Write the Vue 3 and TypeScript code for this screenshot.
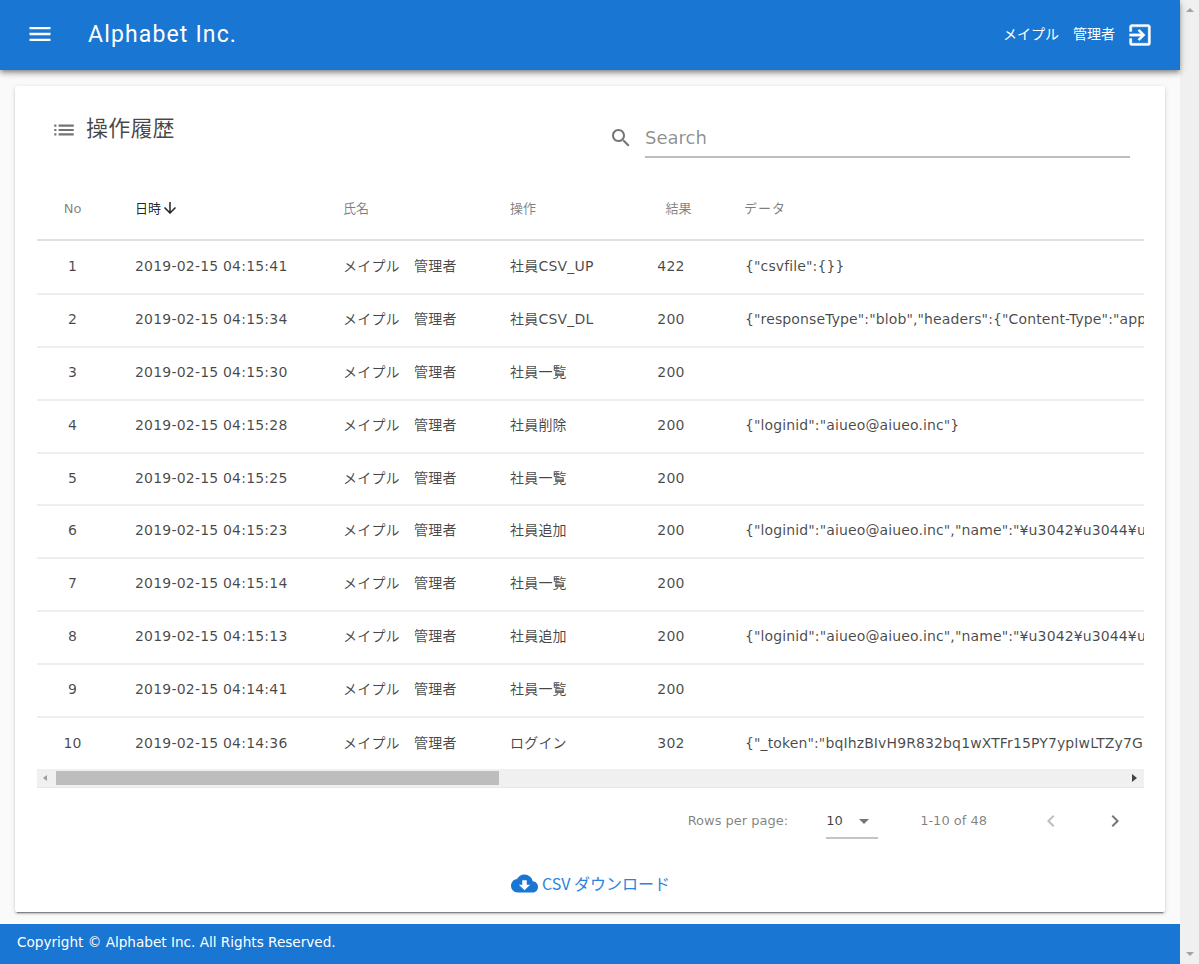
<script setup lang="ts">
interface LogRow {
  no: number
  at: string
  op: string
  code: number
  data: string
}

const name = 'メイプル　管理者'
const rows: LogRow[] = [
  { no: 1, at: '2019-02-15 04:15:41', op: '社員CSV_UP', code: 422, data: '{"csvfile":{}}' },
  { no: 2, at: '2019-02-15 04:15:34', op: '社員CSV_DL', code: 200, data: '{"responseType":"blob","headers":{"Content-Type":"application/json"}}' },
  { no: 3, at: '2019-02-15 04:15:30', op: '社員一覧', code: 200, data: '' },
  { no: 4, at: '2019-02-15 04:15:28', op: '社員削除', code: 200, data: '{"loginid":"aiueo@aiueo.inc"}' },
  { no: 5, at: '2019-02-15 04:15:25', op: '社員一覧', code: 200, data: '' },
  { no: 6, at: '2019-02-15 04:15:23', op: '社員追加', code: 200, data: '{"loginid":"aiueo@aiueo.inc","name":"¥u3042¥u3044¥u3046¥u3048¥u304a"}' },
  { no: 7, at: '2019-02-15 04:15:14', op: '社員一覧', code: 200, data: '' },
  { no: 8, at: '2019-02-15 04:15:13', op: '社員追加', code: 200, data: '{"loginid":"aiueo@aiueo.inc","name":"¥u3042¥u3044¥u3046¥u3048¥u304a"}' },
  { no: 9, at: '2019-02-15 04:14:41', op: '社員一覧', code: 200, data: '' },
  { no: 10, at: '2019-02-15 04:14:36', op: 'ログイン', code: 302, data: '{"_token":"bqIhzBIvH9R832bq1wXTFr15PY7ypIwLTZy7GkQmPd2x"}' },
]
</script>

<template>
  <div class="shell">
    <div class="page">
      <header class="appbar">
        <svg class="menu-icon" viewBox="0 0 24 24"><path d="M3 6h18v2H3V6m0 5h18v2H3v-2m0 5h18v2H3v-2z" /></svg>
        <span class="brand">Alphabet Inc.</span>
        <span class="user">{{ name }}</span>
        <svg class="exit-icon" viewBox="0 0 24 24"><path d="M10.09 15.59L11.5 17l5-5-5-5-1.41 1.41L12.67 11H3v2h9.67l-2.58 2.59zM19 3H5c-1.11 0-2 .9-2 2v4h2V5h14v14H5v-4H3v4c0 1.1.89 2 2 2h14c1.1 0 2-.9 2-2V5c0-1.1-.9-2-2-2z" /></svg>
      </header>

      <main class="content">
        <section class="card">
          <div class="card-title">
            <div class="heading">
              <svg class="list-icon" viewBox="0 0 24 24"><path d="M3 13h2v-2H3v2zm0 4h2v-2H3v2zm0-8h2V7H3v2zm4 4h14v-2H7v2zm0 4h14v-2H7v2zM7 7v2h14V7H7z" /></svg>
              <h1>操作履歴</h1>
            </div>
            <div class="search">
              <svg class="search-icon" viewBox="0 0 24 24"><path d="M15.5 14h-.79l-.28-.27C15.41 12.59 16 11.11 16 9.5 16 5.91 13.09 3 9.5 3S3 5.91 3 9.5 5.91 16 9.5 16c1.61 0 3.09-.59 4.23-1.57l.27.28v.79l5 4.99L20.49 19l-4.99-5zm-6 0C7.01 14 5 11.99 5 9.5S7.01 5 9.5 5 14 7.01 14 9.5 11.99 14 9.5 14z" /></svg>
              <div class="search-field">Search</div>
            </div>
          </div>

          <div class="table-wrap">
            <div class="table">
              <div class="row head">
                <div class="cell center first latin">No</div>
                <div class="cell active">日時<svg class="sort-icon" viewBox="0 0 24 24"><path d="M20 12l-1.41-1.41L13 16.17V4h-2v12.17l-5.58-5.59L4 12l8 8 8-8z" /></svg></div>
                <div class="cell">氏名</div>
                <div class="cell">操作</div>
                <div class="cell center shifted">結果</div>
                <div class="cell data-head">データ</div>
              </div>
              <div v-for="r in rows" :key="r.no" class="row body">
                <div class="cell center first">{{ r.no }}</div>
                <div class="cell">{{ r.at }}</div>
                <div class="cell cjk">{{ name }}</div>
                <div class="cell cjk">{{ r.op }}</div>
                <div class="cell center code">{{ r.code }}</div>
                <div class="cell data">{{ r.data }}</div>
              </div>
            </div>
          </div>

          <div class="hscroll">
            <span class="arrow-left"></span>
            <span class="thumb"></span>
            <span class="arrow-right"></span>
          </div>

          <div class="pagination">
            <span class="rows-label">Rows per page:</span>
            <div class="select">
              <span>10</span>
              <svg class="drop-icon" viewBox="0 0 24 24"><path d="M7 10l5 5 5-5z" /></svg>
            </div>
            <span class="range">1-10 of 48</span>
            <svg class="chev prev" viewBox="0 0 24 24"><path d="M15.41 7.41L14 6l-6 6 6 6 1.41-1.41L10.83 12z" /></svg>
            <svg class="chev next" viewBox="0 0 24 24"><path d="M10 6L8.59 7.41 13.17 12l-4.58 4.59L10 18l6-6z" /></svg>
          </div>

          <div class="download">
            <svg class="cloud-icon" viewBox="0 0 24 24"><path d="M19.35 10.04C18.67 6.59 15.64 4 12 4 9.11 4 6.6 5.64 5.35 8.04 2.34 8.36 0 10.91 0 14c0 3.31 2.69 6 6 6h13c2.76 0 5-2.24 5-5 0-2.64-2.05-4.78-4.65-4.96zM17 13l-5 5-5-5h3V9h4v4h3z" /></svg>
            <span>CSV ダウンロード</span>
          </div>
        </section>
      </main>

      <footer class="footer">Copyright © Alphabet Inc. All Rights Reserved.</footer>
    </div>

    <div class="vscroll">
      <span class="arrow-up"></span>
      <span class="arrow-down"></span>
    </div>
  </div>
</template>

<style scoped>
.shell {
  display: flex;
  height: 964px;
  width: 1199px;
  overflow: hidden;
  background: #fafafa;
  font-family: "DejaVu Sans", "Noto Sans CJK JP", sans-serif;
  color: rgba(0, 0, 0, 0.72);
}
.page {
  flex: 1;
  min-width: 0;
  display: flex;
  flex-direction: column;
}
.appbar {
  height: 70px;
  flex: none;
  display: flex;
  align-items: center;
  background: #1976d2;
  color: #fff;
  box-shadow: 0 2px 4px -1px rgba(0, 0, 0, 0.3), 0 4px 5px 0 rgba(0, 0, 0, 0.2), 0 1px 10px 0 rgba(0, 0, 0, 0.12);
  position: relative;
  padding: 0 26px 0 26px;
}
.menu-icon {
  width: 28px;
  height: 28px;
  fill: #fff;
  margin-top: -2px;
}
.brand {
  margin-left: 34px;
  margin-right: auto;
  font: 400 23px Roboto, sans-serif;
  letter-spacing: 1.15px;
  margin-top: -2px;
}
.user {
  font-size: 14px;
  font-family: "Noto Sans CJK JP", sans-serif;
  margin-top: -4px;
}
.exit-icon {
  width: 28px;
  height: 28px;
  margin-left: 11px;
  fill: #fff;
  stroke: #fff;
  stroke-width: 0.3px;
}
.content {
  flex: 1;
  padding: 16px 15px 12px;
  min-height: 0;
}
.card {
  height: 826px;
  background: #fff;
  border-radius: 2px;
  box-shadow: 0 3px 1px -2px rgba(0, 0, 0, 0.35), 0 2px 2px 0 rgba(0, 0, 0, 0.14), 0 1px 5px 0 rgba(0, 0, 0, 0.12);
  padding: 0 21px 0 22px;
  display: flex;
  flex-direction: column;
}
.card-title {
  height: 92px;
  flex: none;
  display: flex;
  justify-content: space-between;
  padding: 0 14px 0 14px;
}
.heading {
  display: flex;
  align-items: center;
  height: 88px;
}
.heading h1 {
  margin: 0 0 8px 9px;
  font: 400 22px "Noto Sans CJK JP", sans-serif;
  letter-spacing: 0.2px;
}
.list-icon {
  width: 26px;
  height: 26px;
  fill: rgba(0, 0, 0, 0.55);
}
.search {
  display: flex;
  align-items: flex-start;
  padding-top: 40px;
}
.search-icon {
  width: 24px;
  height: 24px;
  fill: rgba(0, 0, 0, 0.54);
  margin-right: 12px;
}
.search-field {
  width: 485px;
  height: 30px;
  border-bottom: 2px solid #bdbdbd;
  font-size: 18px;
  line-height: 24px;
  color: rgba(0, 0, 0, 0.45);
  box-sizing: content-box;
}
.table-wrap {
  overflow: hidden;
  flex: none;
}
.table {
  width: 2671px;
}
.row {
  display: grid;
  grid-template-columns: 74px 208px 167px 136px 97px 1989px;
  align-items: center;
  box-sizing: border-box;
}
.row.head {
  height: 63px;
  margin-bottom: 1px;
  padding-bottom: 2px;
  border-bottom: 2px solid #e0e0e0;
  font-size: 13px;
  color: rgba(0, 0, 0, 0.5);
}
.row.body {
  height: 52.9px;
  padding-bottom: 3px;
  border-bottom: 2px solid #eeeeee;
  font-size: 14px;
  letter-spacing: 0.2px;
}
.row.body:last-child {
  height: 51px;
  padding-bottom: 2px;
  border-bottom: 0;
}
.cell {
  padding: 0 24px;
  white-space: nowrap;
  min-width: 0;
}
.cell.center {
  text-align: center;
  padding: 0;
}
.cell.first {
  padding-right: 3px;
}
.cell.latin {
  margin-top: 2px;
}
.cell.code {
  padding-left: 1px;
}
.cell.shifted {
  padding-left: 16px;
}
.cell.active {
  display: flex;
  align-items: center;
  color: rgba(0, 0, 0, 0.87);
}
.cell.cjk {
  margin-top: -2px;
}
.cell.data-head {
  padding-left: 25px;
  letter-spacing: 1px;
}
.cell.data {
  padding-left: 26px;
  letter-spacing: 0.12px;
}
.sort-icon {
  width: 18px;
  height: 18px;
  fill: rgba(0, 0, 0, 0.87);
}
.hscroll {
  height: 19px;
  flex: none;
  background: #f0f0f0;
  display: flex;
  align-items: center;
  border-bottom: 1px solid #e8e8e8;
  box-sizing: border-box;
}
.arrow-left {
  width: 0;
  height: 0;
  margin-left: 6px;
  margin-right: 9px;
  border-style: solid;
  border-width: 3.5px 4px 3.5px 0;
  border-color: transparent #9e9e9e transparent transparent;
}
.thumb {
  width: 443px;
  height: 14px;
  background: #bdbdbd;
  margin-right: auto;
}
.arrow-right {
  width: 0;
  height: 0;
  margin-right: 7px;
  border-style: solid;
  border-width: 4px 0 4px 5px;
  border-color: transparent transparent transparent #424242;
}
.pagination {
  height: 65px;
  flex: none;
  display: flex;
  align-items: center;
  justify-content: flex-end;
  padding-right: 17px;
  font-size: 13px;
  color: rgba(0, 0, 0, 0.5);
}
.select {
  width: 52px;
  height: 36px;
  margin: 1px 42px 0 38px;
  display: flex;
  align-items: center;
  justify-content: space-between;
  border-bottom: 2px solid #c4c4c4;
  box-sizing: border-box;
  color: rgba(0, 0, 0, 0.75);
  padding: 1px 2px 0 0;
}
.drop-icon {
  width: 24px;
  height: 24px;
  fill: rgba(0, 0, 0, 0.54);
}
.chev {
  width: 24px;
  height: 24px;
  fill: rgba(0, 0, 0, 0.54);
}
.chev.prev {
  margin-left: 52px;
  fill: rgba(0, 0, 0, 0.26);
}
.chev.next {
  margin-left: 40px;
}
.download {
  flex: 1;
  display: flex;
  align-items: center;
  justify-content: center;
  gap: 4px;
  font-size: 16px;
  font-family: "Noto Sans CJK JP", sans-serif;
  color: #2b84dc;
}
.cloud-icon {
  width: 27px;
  height: 27px;
  fill: #1976d2;
  margin-top: 2px;
}
.footer {
  height: 40px;
  flex: none;
  background: #1976d2;
  color: #fff;
  font-size: 13.6px;
  line-height: 36px;
  padding-left: 17px;
}
.vscroll {
  width: 19px;
  flex: none;
  background: #f0f0f0;
  display: flex;
  flex-direction: column;
  justify-content: space-between;
  align-items: center;
  padding: 8px 0;
  box-sizing: border-box;
}
.arrow-up {
  width: 0;
  height: 0;
  border-style: solid;
  border-width: 0 4px 4px 4px;
  border-color: transparent transparent #a3a3a3 transparent;
}
.arrow-down {
  width: 0;
  height: 0;
  border-style: solid;
  border-width: 4px 4px 0 4px;
  border-color: #a3a3a3 transparent transparent transparent;
}
</style>
